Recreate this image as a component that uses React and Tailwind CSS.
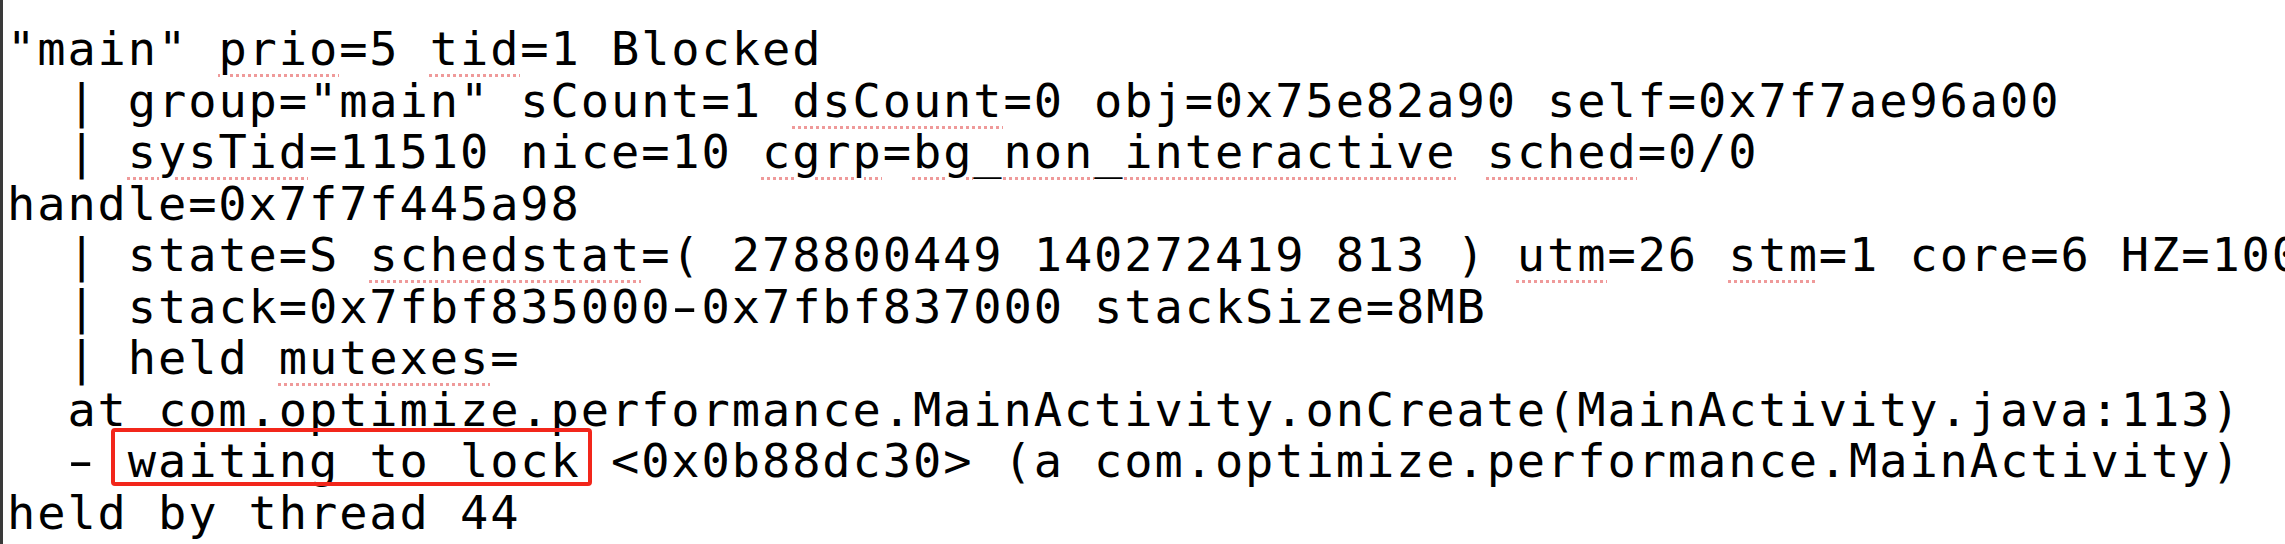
import React from "react";

// words that the editor flags with a dotted red line
function Sq({ children }) {
  return (
    <span className="underline decoration-dotted decoration-[#ef9a9a] decoration-[3px] underline-offset-[9px]">
      {children}
    </span>
  );
}

// the font in the shot draws a long dash
function Dash() {
  return <span className="inline-block scale-x-[1.6]">-</span>;
}

function Boxed({ children }) {
  return (
    <span className="relative">
      {children}
      <span className="absolute -left-[17px] -right-[11px] -top-[5px] h-[58px] border-[4px] border-[#f2261b] rounded-[4px]"></span>
    </span>
  );
}

export default function App() {
  return (
    <div className="w-full h-[544px] bg-white overflow-hidden border-l-[3px] border-[#3a3a3a]">
      <pre
        className="pt-[23px] pl-[4px] text-[47px] leading-[51.5px] tracking-[1.9px] text-black whitespace-pre"
        style={{ fontFamily: '"DejaVu Sans Mono", monospace' }}
      >
        <div>
          "main" <Sq>prio</Sq>=5 <Sq>tid</Sq>=1 Blocked
        </div>
        <div>
          {"  | "}group="main" sCount=1 <Sq>dsCount</Sq>=0 obj=0x75e82a90 self=0x7f7ae96a00
        </div>
        <div>
          {"  | "}<Sq>sysTid</Sq>=11510 nice=10 <Sq>cgrp</Sq>=<Sq>bg</Sq>_<Sq>non</Sq>_<Sq>interactive</Sq>{" "}
          <Sq>sched</Sq>=0/0
        </div>
        <div>handle=0x7f7f445a98</div>
        <div>
          {"  | "}state=S <Sq>schedstat</Sq>=( 278800449 140272419 813 ) <Sq>utm</Sq>=26 <Sq>stm</Sq>=1 core=6 HZ=100
        </div>
        <div>
          {"  | "}stack=0x7fbf835000<Dash />0x7fbf837000 stackSize=8MB
        </div>
        <div>
          {"  | "}held <Sq>mutexes</Sq>=
        </div>
        <div>{"  at com.optimize.performance.MainActivity.onCreate(MainActivity.java:113)"}</div>
        <div>
          {"  "}
          <Dash />{" "}
          <Boxed>waiting to lock</Boxed> {"<0x0b88dc30> (a com.optimize.performance.MainActivity)"}
        </div>
        <div>held by thread 44</div>
      </pre>
    </div>
  );
}
